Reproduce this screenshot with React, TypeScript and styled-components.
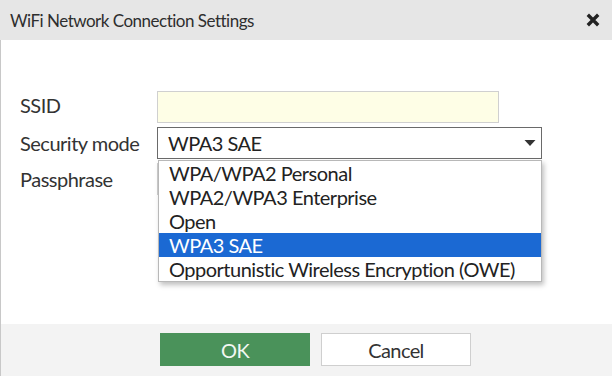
import React from "react";
import styled, { createGlobalStyle } from "styled-components";

const Global = createGlobalStyle`
  html, body { margin: 0; padding: 0; background: #fff; }
  body { font-family: Lato, "Open Sans", sans-serif; color: #333; letter-spacing: -0.5px; }
  * { box-sizing: border-box; }
`;

const Dialog = styled.div`
  width: 612px;
  height: 376px;
  display: flex;
  flex-direction: column;
  overflow: hidden;
`;

const Header = styled.div`
  height: 40px;
  flex: none;
  background: #e6e6e6;
  display: flex;
  align-items: center;
  justify-content: space-between;
  padding: 0 12px 0 10px;
`;

const Title = styled.div`
  font-size: 17px;
  color: #2e2e2e;
`;

const Close = styled.div`
  width: 14px;
  height: 14px;
  display: flex;
  align-items: center;
  justify-content: center;
`;

const Body = styled.div`
  flex: 1;
  border-left: 1px solid #c8c8c8;
  padding: 51px 0 0 19px;
`;

const Form = styled.div`
  display: grid;
  grid-template-columns: 137px 385px;
  grid-auto-rows: 32px;
  row-gap: 4px;
  align-items: center;
`;

const Label = styled.div<{ $shift?: number }>`
  font-size: 20px;
  line-height: 24px;
  color: #333;
  position: relative;
  top: ${(p) => p.$shift ?? 0}px;
`;

const TextInput = styled.div<{ $width: number }>`
  width: ${(p) => p.$width}px;
  height: 32px;
  background: #fefee6;
  border: 1px solid #d0d0d0;
`;

const SelectWrap = styled.div`
  position: relative;
  height: 32px;
`;

const SelectBox = styled.div`
  height: 32px;
  border: 1px solid #6a6a6a;
  display: flex;
  align-items: center;
  justify-content: space-between;
  padding: 0 5px 0 10px;
  font-size: 20px;
  color: #222;
`;

const Menu = styled.div`
  position: absolute;
  top: 33px;
  left: 1px;
  right: 0;
  background: #fff;
  border: 1px solid #b8b8b8;
  box-shadow: 2px 3px 5px rgba(0, 0, 0, 0.25);
  z-index: 5;
`;

const Option = styled.div<{ $selected?: boolean }>`
  height: 24px;
  line-height: 24px;
  padding-left: 10px;
  font-size: 20px;
  color: ${(p) => (p.$selected ? "#fff" : "#222")};
  background: ${(p) => (p.$selected ? "#1b69d3" : "transparent")};
  white-space: nowrap;
`;

const Footer = styled.div`
  height: 52px;
  flex: none;
  background: #f3f3f3;
  border-left: 1px solid #c8c8c8;
  display: flex;
  align-items: center;
  gap: 11px;
  padding: 0 0 1px 159px;
`;

const Button = styled.div<{ $primary?: boolean }>`
  width: 150px;
  height: 33px;
  display: flex;
  align-items: center;
  justify-content: center;
  font-size: 20px;
  letter-spacing: -0.6px;
  background: ${(p) => (p.$primary ? "#4a925a" : "#fff")};
  color: ${(p) => (p.$primary ? "#f2f8f2" : "#333")};
  border: ${(p) => (p.$primary ? "none" : "1px solid #cfcfcf")};
`;

const options = [
  "WPA/WPA2 Personal",
  "WPA2/WPA3 Enterprise",
  "Open",
  "WPA3 SAE",
  "Opportunistic Wireless Encryption (OWE)",
];

export default function App() {
  return (
    <>
      <Global />
      <Dialog>
        <Header>
          <Title>WiFi Network Connection Settings</Title>
          <Close>
            <svg width="14" height="14" viewBox="0 0 14 14">
              <path d="M1.8 1.8 L12.2 12.2 M12.2 1.8 L1.8 12.2" stroke="#222" strokeWidth="3.4" strokeLinecap="butt" />
            </svg>
          </Close>
        </Header>
        <Body>
          <Form>
            <Label $shift={-2}>SSID</Label>
            <TextInput $width={342} />
            <Label>Security mode</Label>
            <SelectWrap>
              <SelectBox>
                <span>WPA3 SAE</span>
                <svg width="12" height="8" viewBox="0 0 12 8">
                  <path d="M0.5 1 L11.5 1 L6 7 Z" fill="#333" />
                </svg>
              </SelectBox>
              <Menu>
                {options.map((o) => (
                  <Option key={o} $selected={o === "WPA3 SAE"}>
                    {o}
                  </Option>
                ))}
              </Menu>
            </SelectWrap>
            <Label>Passphrase</Label>
            <TextInput $width={342} />
          </Form>
        </Body>
        <Footer>
          <Button $primary>OK</Button>
          <Button>Cancel</Button>
        </Footer>
      </Dialog>
    </>
  );
}
